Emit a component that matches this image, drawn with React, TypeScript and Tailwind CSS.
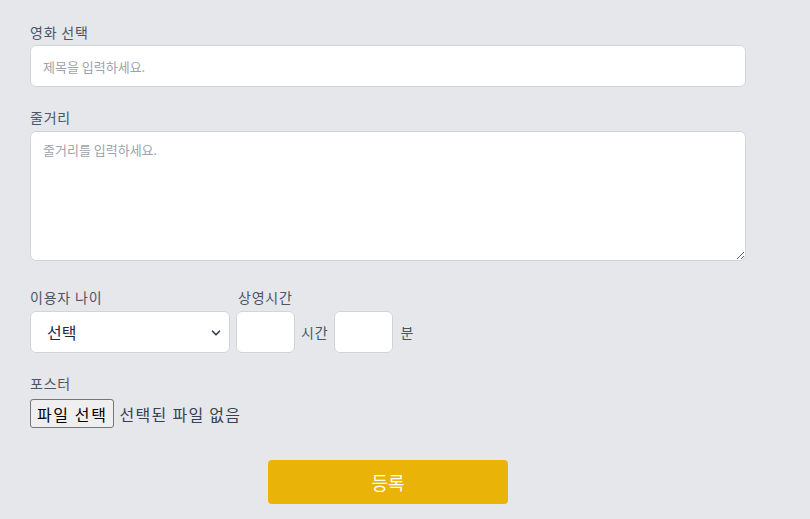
import { ChevronDown } from "lucide-react";

export default function App() {
  return (
    <main
      className="min-h-screen bg-[#e5e7eb] px-[30px] pt-[22px]"
      style={{ fontFamily: '"Noto Sans CJK KR", "Noto Sans", sans-serif' }}
    >
      <div className="w-[716px]">
        <div>
          <label className="block text-sm leading-5 tracking-[0.8px] text-[#4b5563] mb-[3px]">영화 선택</label>
          <input
            type="text"
            placeholder="제목을 입력하세요."
            className="block w-full h-[42px] rounded-md border border-[#d1d5db] bg-white px-3 text-[13px] text-gray-700 placeholder:text-[#9ca3af] outline-none"
          />
        </div>

        <div className="mt-[20px]">
          <label className="block text-sm leading-5 tracking-[0.8px] text-[#4b5563] mb-[4px]">줄거리</label>
          <textarea
            placeholder="줄거리를 입력하세요."
            className="block w-full h-[130px] rounded-md border border-[#d1d5db] bg-white px-3 py-2 text-[13px] text-gray-700 placeholder:text-[#9ca3af] outline-none"
          />
        </div>

        <div className="mt-[26px] flex items-start">
          <div className="w-[200px]">
            <label className="block text-sm leading-5 tracking-[0.8px] text-[#4b5563] mb-[4px]">이용자 나이</label>
            <div className="relative h-[42px] rounded-md border border-[#d1d5db] bg-white flex items-center pl-4">
              <span className="text-base text-[#1f2937]">선택</span>
              <ChevronDown className="absolute right-[6px] top-[14px] w-[14px] h-[14px] text-[#374151]" strokeWidth={3} />
            </div>
          </div>
          <div className="ml-[6px]">
            <label className="block text-sm leading-5 tracking-[0.8px] text-[#4b5563] mb-[4px] ml-[2px]">상영시간</label>
            <div className="flex items-center">
              <div className="w-[59px] h-[42px] rounded-md border border-[#d1d5db] bg-white" />
              <span className="ml-[6px] mr-[6px] text-sm tracking-[0.8px] text-[#4b5563]">시간</span>
              <div className="w-[59px] h-[42px] rounded-md border border-[#d1d5db] bg-white" />
              <span className="ml-[7px] text-sm text-[#4b5563]">분</span>
            </div>
          </div>
        </div>

        <div className="mt-[20px]">
          <label className="block text-sm leading-5 tracking-[0.8px] text-[#4b5563] mb-[6px]">포스터</label>
          <div className="flex items-center">
            <button className="h-[29px] px-[6px] rounded-[3px] border border-[#767676] bg-[#efefef] text-base leading-none tracking-[1.6px] text-black">
              파일 선택
            </button>
            <span className="ml-[5px] text-base tracking-[1.3px] text-[#374151]">선택된 파일 없음</span>
          </div>
        </div>

        <div className="mt-[32px] flex justify-center">
          <button className="w-[240px] h-[44px] rounded-[4px] bg-[#eab308] text-white text-lg">등록</button>
        </div>
      </div>
    </main>
  );
}
